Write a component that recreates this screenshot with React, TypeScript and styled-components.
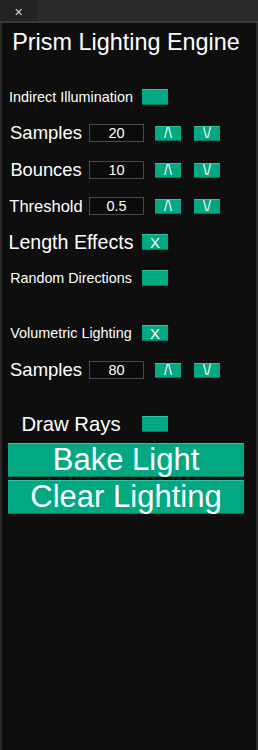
import * as React from 'react';
import styled, { createGlobalStyle } from 'styled-components';

const GlobalStyle = createGlobalStyle`
	html, body {
		margin: 0;
		padding: 0;
		background: #0e0e0e;
	}
	body {
		font-family: 'Liberation Sans', Arial, sans-serif;
		color: #ffffff;
	}
`;

const green = '#01a882';

const Window = styled.div`
	width: 258px;
	height: 750px;
	display: flex;
	flex-direction: column;
	background: #0e0e0e;
	box-sizing: border-box;
	overflow: hidden;
`;

const TabBar = styled.div`
	height: 21px;
	display: flex;
	background: #2b2b2b;
	border-bottom: 2px solid #3a3a3a;
`;

const Tab = styled.div`
	width: 37px;
	padding-top: 2px;
	display: flex;
	align-items: center;
	justify-content: center;
	background: #232323;
	color: #d8d8d8;
	font-size: 14px;
`;

const Panel = styled.div`
	flex: 1;
	display: flex;
	flex-direction: column;
	padding-left: 2px;
	border-left: 2px solid #2a2a2a;
	border-right: 2px solid #2a2a2a;
`;

const Title = styled.div`
	height: 37px;
	margin-top: 1px;
	margin-bottom: 18px;
	display: flex;
	align-items: center;
	justify-content: center;
	padding-right: 8px;
	font-size: 23.4px;
	white-space: nowrap;
`;

const Row = styled.div<{ $gap?: number }>`
	height: 36px;
	margin-top: ${p => p.$gap ?? 0}px;
	display: flex;
	align-items: center;
`;

const Label = styled.div<{ $size: number; $width: number }>`
	width: ${p => p.$width}px;
	flex: none;
	text-align: center;
	font-size: ${p => p.$size}px;
	white-space: nowrap;
`;

const Toggle = styled.div`
	width: 26px;
	height: 16px;
	margin-left: 4px;
	box-sizing: border-box;
	background: ${green};
	border-top: 1px solid #2fc29f;
	border-bottom: 1px solid #007a5e;
	display: flex;
	align-items: center;
	justify-content: center;
	font-size: 15px;
	line-height: 1;
`;

const NumberField = styled.div`
	width: 55px;
	height: 18px;
	margin-left: 1px;
	box-sizing: border-box;
	border: 1px solid #4a4a4a;
	background: #0b0b0b;
	display: flex;
	align-items: center;
	justify-content: center;
	font-size: 14.5px;
`;

const StepButton = styled.div<{ $ml: number }>`
	width: 26px;
	height: 15px;
	margin-left: ${p => p.$ml}px;
	box-sizing: border-box;
	background: ${green};
	border-top: 1px solid #2fc29f;
	border-bottom: 1px solid #007a5e;
	display: flex;
	align-items: center;
	justify-content: center;
	font-size: 14px;
	line-height: 1;
`;

const BigButton = styled.div<{ $mt: number }>`
	width: 236px;
	height: 34px;
	margin-left: 4px;
	margin-top: ${p => p.$mt}px;
	box-sizing: border-box;
	background: ${green};
	border-top: 1px solid #2fc29f;
	border-bottom: 1px solid #007a5e;
	display: flex;
	align-items: center;
	justify-content: center;
	font-size: 31px;
	white-space: nowrap;
`;

interface IToggleRowProps {
	label: string;
	size: number;
	checked?: boolean;
	gap?: number;
}

const ToggleRow: React.FunctionComponent<IToggleRowProps> = props => (
	<Row $gap={props.gap}>
		<Label $size={props.size} $width={134}>
			{props.label}
		</Label>
		<Toggle>{props.checked ? 'X' : ''}</Toggle>
	</Row>
);

interface INumberRowProps {
	label: string;
	size: number;
	value: string;
	gap?: number;
}

const NumberRow: React.FunctionComponent<INumberRowProps> = props => (
	<Row $gap={props.gap}>
		<Label $size={props.size} $width={84}>
			{props.label}
		</Label>
		<NumberField>{props.value}</NumberField>
		<StepButton $ml={11}>/\</StepButton>
		<StepButton $ml={13}>\/</StepButton>
	</Row>
);

const App: React.FunctionComponent = () => {
	return (
		<Window>
			<GlobalStyle />
			<TabBar>
				<Tab>×</Tab>
			</TabBar>
			<Panel>
				<Title>Prism Lighting Engine</Title>
				<ToggleRow label="Indirect Illumination" size={14.4} />
				<NumberRow label="Samples" size={18.5} value="20" />
				<NumberRow label="Bounces" size={18.3} value="10" gap={1} />
				<NumberRow label="Threshold" size={16.5} value="0.5" />
				<ToggleRow label="Length Effects" size={19.6} checked />
				<ToggleRow label="Random Directions" size={14.3} />
				<ToggleRow label="Volumetric Lighting" size={14.4} checked gap={19} />
				<NumberRow label="Samples" size={18.5} value="80" gap={1} />
				<ToggleRow label="Draw Rays" size={20.3} gap={18} />
				<BigButton $mt={1}>Bake Light</BigButton>
				<BigButton $mt={3}>Clear Lighting</BigButton>
			</Panel>
		</Window>
	);
};

export default App;
